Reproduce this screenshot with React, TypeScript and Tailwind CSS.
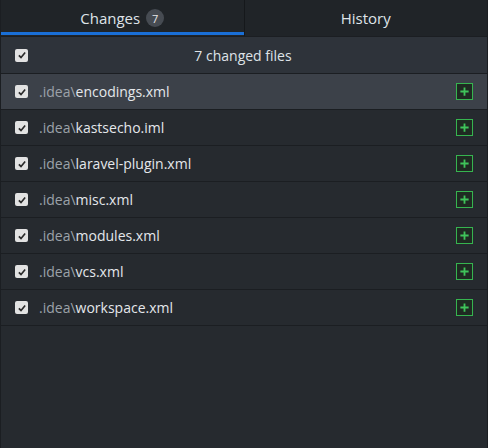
const files = [
  "encodings.xml",
  "kastsecho.iml",
  "laravel-plugin.xml",
  "misc.xml",
  "modules.xml",
  "vcs.xml",
  "workspace.xml",
];

function Check() {
  return (
    <span className="flex h-[13px] w-[13px] shrink-0 items-center justify-center rounded-[2px] bg-[#e2e2e2]">
      <svg viewBox="0 0 12 12" className="h-[10px] w-[10px]">
        <path d="M2.2 6.4 L4.8 8.9 L9.8 3" fill="none" stroke="#2a2a2a" strokeWidth="2" />
      </svg>
    </span>
  );
}

function Plus() {
  return (
    <span className="flex h-[17px] w-[17px] items-center justify-center border border-[#36b44f] bg-[#1f2a22]">
      <svg viewBox="0 0 12 12" className="h-[11px] w-[11px]">
        <path d="M6 1.5 V10.5 M1.5 6 H10.5" stroke="#3fc45a" strokeWidth="2" />
      </svg>
    </span>
  );
}

export default function App() {
  return (
    <div
      className="flex h-[448px] w-[488px] flex-col overflow-hidden border-x border-[#1b1e22] bg-[#262a2f] text-[14px]"
      style={{ fontFamily: '"Open Sans", "Noto Sans", sans-serif' }}
    >
      {/* tabs */}
      <div className="flex h-9 shrink-0 bg-[#202428]">
        <div className="relative flex flex-1 items-center justify-center gap-[6px] border-r border-[#15181b] text-[15px] text-[#dfe3e8]">
          <span>Changes</span>
          <span className="flex h-[18px] min-w-[18px] items-center justify-center rounded-full bg-[#464b52] px-[5px] text-[11px] leading-none text-[#e6e6e6]">
            7
          </span>
          <div className="absolute bottom-[1px] left-0 right-0 h-[3px] bg-[#1a6fd6]" />
        </div>
        <div className="flex flex-1 items-center justify-center text-[15px] text-[#dfe3e8]">
          History
        </div>
      </div>

      {/* header */}
      <div className="flex h-[38px] shrink-0 items-center border-y border-[#1b1e22] bg-[#2e333a] pl-[14px] pr-4">
        <Check />
        <div className="flex-1 pr-[13px] text-center text-[#dfe3e8]">7 changed files</div>
      </div>

      {/* files */}
      <div>
        {files.map((f, i) => (
          <div
            key={f}
            className={
              "flex h-9 items-center border-b border-[#1b1e22] pl-[14px] pr-[14px] " +
              (i === 0 ? "bg-[#3c4149]" : "bg-[#262a2f]")
            }
          >
            <Check />
            <div className="ml-[11px] flex-1">
              <span className="text-[#9ca2a9]">.idea\</span>
              <span className="text-[#e4e7eb]">{f}</span>
            </div>
            <Plus />
          </div>
        ))}
      </div>
    </div>
  );
}
